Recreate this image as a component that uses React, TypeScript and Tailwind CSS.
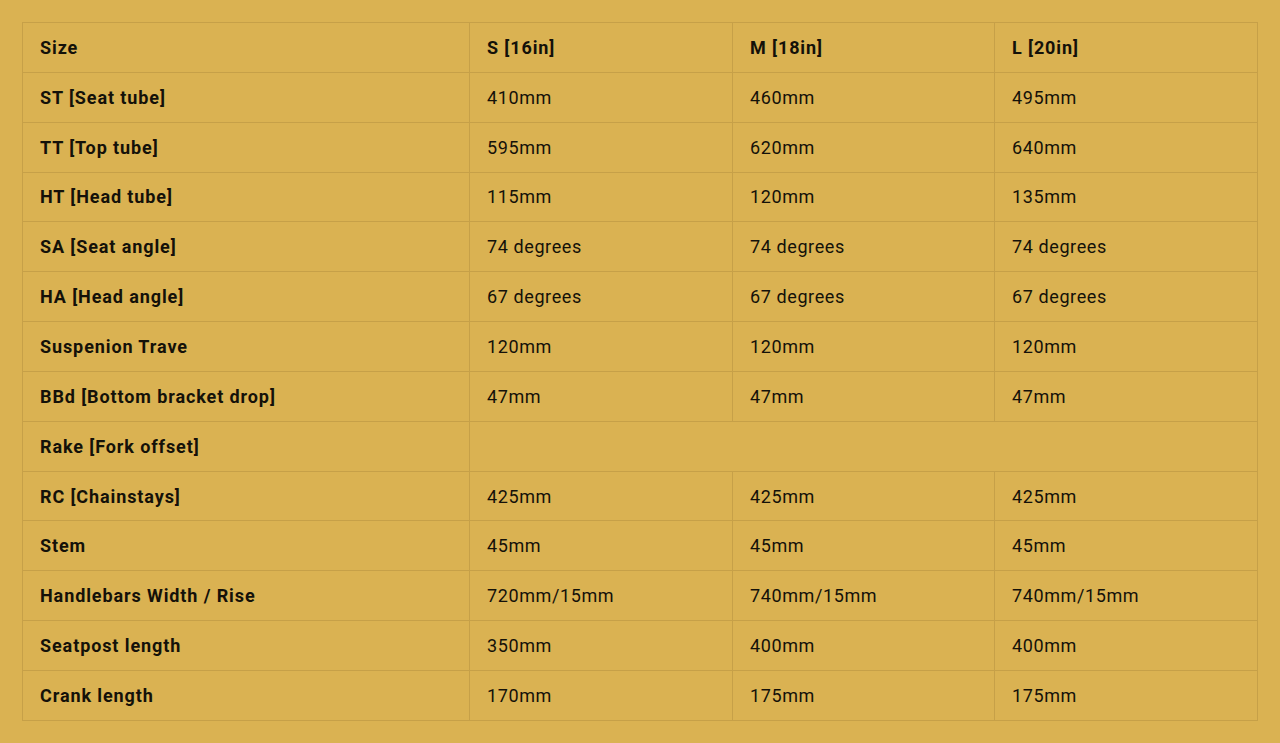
const rows: [string, string, string, string][] = [
  ["ST [Seat tube]", "410mm", "460mm", "495mm"],
  ["TT [Top tube]", "595mm", "620mm", "640mm"],
  ["HT [Head tube]", "115mm", "120mm", "135mm"],
  ["SA [Seat angle]", "74 degrees", "74 degrees", "74 degrees"],
  ["HA [Head angle]", "67 degrees", "67 degrees", "67 degrees"],
  ["Suspenion Trave", "120mm", "120mm", "120mm"],
  ["BBd [Bottom bracket drop]", "47mm", "47mm", "47mm"],
];

const rowsAfter: [string, string, string, string][] = [
  ["RC [Chainstays]", "425mm", "425mm", "425mm"],
  ["Stem", "45mm", "45mm", "45mm"],
  ["Handlebars Width / Rise", "720mm/15mm", "740mm/15mm", "740mm/15mm"],
  ["Seatpost length", "350mm", "400mm", "400mm"],
  ["Crank length", "170mm", "175mm", "175mm"],
];

const cell = "border border-[#c6a048] pl-[17px] pr-2 h-[49.85px] pt-[1px] align-middle";

function Row({ r }: { r: [string, string, string, string] }) {
  return (
    <tr>
      <td className={`${cell} font-bold tracking-[0.9px]`}>{r[0]}</td>
      <td className={cell}>{r[1]}</td>
      <td className={cell}>{r[2]}</td>
      <td className={cell}>{r[3]}</td>
    </tr>
  );
}

export default function App() {
  return (
    <div className="w-full min-h-[743px] bg-[#dab252] p-[22px] font-['Roboto',sans-serif] text-[18px] leading-6 tracking-[0.6px] text-[#141109]">
      <table className="w-[1235px] border-collapse table-fixed">
        <colgroup>
          <col className="w-[447px]" />
          <col className="w-[263px]" />
          <col className="w-[262px]" />
          <col className="w-[263px]" />
        </colgroup>
        <tbody>
          <tr className="font-bold">
            <td className={`${cell} tracking-[0.9px]`}>Size</td>
            <td className={`${cell} tracking-[0.9px]`}>S [16in]</td>
            <td className={`${cell} tracking-[0.9px]`}>M [18in]</td>
            <td className={`${cell} tracking-[0.9px]`}>L [20in]</td>
          </tr>
          {rows.map((r) => (
            <Row key={r[0]} r={r} />
          ))}
          <tr>
            <td className={`${cell} font-bold tracking-[0.9px]`}>Rake [Fork offset]</td>
            <td className={cell} colSpan={3}></td>
          </tr>
          {rowsAfter.map((r) => (
            <Row key={r[0]} r={r} />
          ))}
        </tbody>
      </table>
    </div>
  );
}
